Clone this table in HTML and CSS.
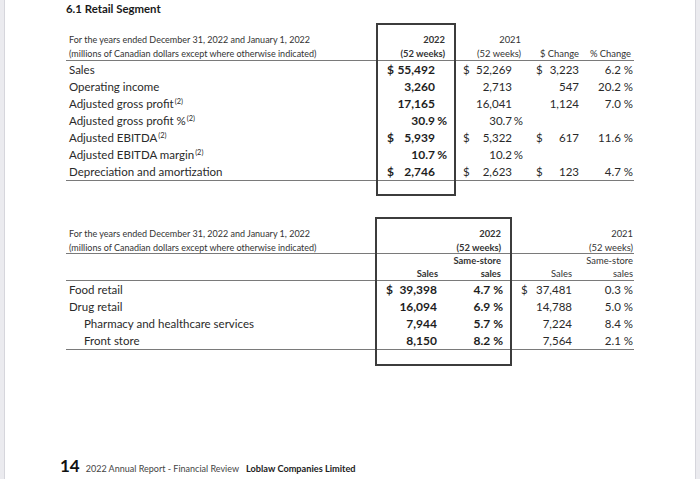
FILE: index.html
```html
<!DOCTYPE html>
<html lang="en">
<head>
<meta charset="utf-8">
<title>6.1 Retail Segment</title>
<link rel="stylesheet" href="styles.css">
</head>
<body>
<div class="page">
  <div class="edge edge-left"></div>
  <main class="content">
    <h1 class="title">6.1 Retail Segment</h1>

    <section class="tbl t1">
      <div class="box box1"></div>
      <div class="row head">
        <div class="lab small"><div>For the years ended December 31, 2022 and January 1, 2022</div><div>(millions of Canadian dollars except where otherwise indicated)</div></div>
        <div class="h c22 b"><div>2022</div><div>(52 weeks)</div></div>
        <div class="h c21"><div>2021</div><div>(52 weeks)</div></div>
        <div class="h cdc"><div>$ Change</div></div>
        <div class="h cpc"><div>% Change</div></div>
      </div>
      <div class="body">
        <div class="row">
          <div class="lab">Sales</div>
          <div class="v c22 b"><span class="cur">$</span><span class="num">55,492</span><span class="suf"></span></div>
          <div class="v c21"><span class="cur">$</span><span class="num">52,269</span><span class="suf"></span></div>
          <div class="v cdc"><span class="cur">$</span><span class="num">3,223</span></div>
          <div class="v cpc"><span class="num">6.2 %</span></div>
        </div>
        <div class="row">
          <div class="lab">Operating income</div>
          <div class="v c22 b"><span class="num">3,260</span><span class="suf"></span></div>
          <div class="v c21"><span class="num">2,713</span><span class="suf"></span></div>
          <div class="v cdc"><span class="num">547</span></div>
          <div class="v cpc"><span class="num">20.2 %</span></div>
        </div>
        <div class="row">
          <div class="lab">Adjusted gross profit<sup>(2)</sup></div>
          <div class="v c22 b"><span class="num">17,165</span><span class="suf"></span></div>
          <div class="v c21"><span class="num">16,041</span><span class="suf"></span></div>
          <div class="v cdc"><span class="num">1,124</span></div>
          <div class="v cpc"><span class="num">7.0 %</span></div>
        </div>
        <div class="row">
          <div class="lab">Adjusted gross profit %<sup>(2)</sup></div>
          <div class="v c22 b"><span class="num">30.9</span><span class="suf">%</span></div>
          <div class="v c21"><span class="num">30.7</span><span class="suf">%</span></div>
          <div class="v cdc"></div>
          <div class="v cpc"></div>
        </div>
        <div class="row">
          <div class="lab">Adjusted EBITDA<sup>(2)</sup></div>
          <div class="v c22 b"><span class="cur">$</span><span class="num">5,939</span><span class="suf"></span></div>
          <div class="v c21"><span class="cur">$</span><span class="num">5,322</span><span class="suf"></span></div>
          <div class="v cdc"><span class="cur">$</span><span class="num">617</span></div>
          <div class="v cpc"><span class="num">11.6 %</span></div>
        </div>
        <div class="row">
          <div class="lab">Adjusted EBITDA margin<sup>(2)</sup></div>
          <div class="v c22 b"><span class="num">10.7</span><span class="suf">%</span></div>
          <div class="v c21"><span class="num">10.2</span><span class="suf">%</span></div>
          <div class="v cdc"></div>
          <div class="v cpc"></div>
        </div>
        <div class="row">
          <div class="lab">Depreciation and amortization</div>
          <div class="v c22 b"><span class="cur">$</span><span class="num">2,746</span><span class="suf"></span></div>
          <div class="v c21"><span class="cur">$</span><span class="num">2,623</span><span class="suf"></span></div>
          <div class="v cdc"><span class="cur">$</span><span class="num">123</span></div>
          <div class="v cpc"><span class="num">4.7 %</span></div>
        </div>
      </div>
    </section>

    <section class="tbl t2">
      <div class="box box2"></div>
      <div class="row head head1">
        <div class="lab small"><div>For the years ended December 31, 2022 and January 1, 2022</div><div>(millions of Canadian dollars except where otherwise indicated)</div></div>
        <div class="h y22 b"><div>2022</div><div>(52 weeks)</div></div>
        <div class="h y21"><div>2021</div><div>(52 weeks)</div></div>
      </div>
      <div class="row head head2">
        <div class="lab"></div>
        <div class="h s22 b"><div>Sales</div></div>
        <div class="h ss22 b"><div>Same-store</div><div>sales</div></div>
        <div class="h s21"><div>Sales</div></div>
        <div class="h ss21"><div>Same-store</div><div>sales</div></div>
      </div>
      <div class="body">
        <div class="row">
          <div class="lab">Food retail</div>
          <div class="v s22 b"><span class="cur">$</span><span class="num">39,398</span></div>
          <div class="v ss22 b"><span class="num">4.7 %</span></div>
          <div class="v s21"><span class="cur">$</span><span class="num">37,481</span></div>
          <div class="v ss21"><span class="num">0.3 %</span></div>
        </div>
        <div class="row">
          <div class="lab">Drug retail</div>
          <div class="v s22 b"><span class="num">16,094</span></div>
          <div class="v ss22 b"><span class="num">6.9 %</span></div>
          <div class="v s21"><span class="num">14,788</span></div>
          <div class="v ss21"><span class="num">5.0 %</span></div>
        </div>
        <div class="row">
          <div class="lab sub">Pharmacy and healthcare services</div>
          <div class="v s22 b"><span class="num">7,944</span></div>
          <div class="v ss22 b"><span class="num">5.7 %</span></div>
          <div class="v s21"><span class="num">7,224</span></div>
          <div class="v ss21"><span class="num">8.4 %</span></div>
        </div>
        <div class="row">
          <div class="lab sub">Front store</div>
          <div class="v s22 b"><span class="num">8,150</span></div>
          <div class="v ss22 b"><span class="num">8.2 %</span></div>
          <div class="v s21"><span class="num">7,564</span></div>
          <div class="v ss21"><span class="num">2.1 %</span></div>
        </div>
      </div>
    </section>

    <footer class="footer">
      <span class="pg">14</span>
      <span class="doc">2022 Annual Report - Financial Review</span>
      <span class="co">Loblaw Companies Limited</span>
    </footer>
  </main>
  <div class="edge edge-right"></div>
</div>
</body>
</html>
```

FILE: styles.css
```css
* { box-sizing: border-box; }
html, body { margin: 0; padding: 0; background: #fff; }
body {
  font-family: "Lato", "Liberation Sans", sans-serif;
  color: #2a2a2a;
  width: 700px;
  height: 479px;
  overflow: hidden;
}
.page {
  display: flex;
  width: 700px;
  height: 479px;
}
.edge {
  flex: 0 0 5px;
  background: #ebebef;
}
.edge-left { border-right: 1px solid #d6d6dc; }
.edge-right { border-left: 1px solid #d6d6dc; }
.content {
  flex: 1;
  padding-left: 61px;
  display: flex;
  flex-direction: column;
}
.title {
  margin: 2px 0 0 0;
  font-size: 11.4px;
  line-height: 14px;
  font-weight: 700;
  color: #1a1a1a;
}
.tbl {
  position: relative;
  width: 568px;
}
.t1 { margin-top: 17px; }
.t2 { margin-top: 46px; }
.box {
  position: absolute;
  top: -10px;
  border: 2px solid #3c3c3c;
  pointer-events: none;
}
.box1 { left: 310px; width: 80px; height: 173px; }
.box2 { left: 309px; width: 137px; height: 149px; }

.row {
  display: grid;
  align-items: end;
}
.t1 .row { grid-template-columns: 310px 79px 70px 58px 51px; }
.t2 .row { grid-template-columns: 309px 75px 61px 69px 54px; }
.t2 .head1 { grid-template-columns: 309px 136px 123px; }

.head {
  border-bottom: 1px solid #7a7a7a;
  font-size: 9.4px;
  line-height: 13.5px;
  color: #333;
}
.head2 { line-height: 13px; }
.t1 .head { height: 28px; }
.t2 .head1 { height: 27px; }
.t2 .head2 { height: 27px; }
.small { font-size: 9px; padding-left: 3px; color: #333; }
.h { text-align: right; white-space: nowrap; }
.b { font-weight: 700; }

.body {
  border-bottom: 1px solid #7a7a7a;
}
.body .row {
  height: 17px;
  align-items: center;
  font-size: 11.5px;
  line-height: 17px;
}
.lab { padding-left: 3px; white-space: nowrap; }
.lab.sub { padding-left: 18px; }
.lab sup {
  font-size: 7.4px;
  line-height: 0;
  vertical-align: 4px;
  margin-left: 1px;
}
.v {
  display: flex;
  align-items: baseline;
  white-space: nowrap;
}
.v.b { font-size: 12px; color: #1e1e1e; }
.v .num { margin-left: auto; }
.suf { display: inline-block; text-align: right; }

/* table 1 columns */
.t1 .h.c22 { padding-right: 10px; }
.t1 .h.c21 { padding-right: 4px; }
.t1 .h.cdc { padding-right: 4px; }
.t1 .h.cpc { padding-right: 3px; }
.t1 .v.c22 { padding-left: 11px; padding-right: 8px; }
.t1 .v.c22 .suf { width: 12px; }
.t1 .v.c21 { padding-left: 8px; padding-right: 2px; }
.t1 .v.c21 .suf { width: 11px; }
.t1 .v.cdc { padding-left: 11px; padding-right: 4px; }
.t1 .v.cpc { padding-right: 1px; }

/* table 2 columns */
.t2 .h.y22 { padding-right: 10px; }
.t2 .h.y21 { padding-right: 1px; }
.t2 .h.s22 { padding-right: 12px; }
.t2 .h.ss22 { padding-right: 10px; }
.t2 .h.s21 { padding-right: 8px; }
.t2 .h.ss21 { padding-right: 1px; }
.t2 .v.s22 { padding-left: 11px; padding-right: 13px; }
.t2 .v.ss22 { padding-right: 8px; }
.t2 .v.s21 { padding-left: 10px; padding-right: 8px; }
.t2 .v.ss21 { padding-right: 1px; }

.footer {
  margin-top: auto;
  margin-left: -6px;
  margin-bottom: 0;
  display: flex;
  align-items: baseline;
  gap: 6px;
  line-height: 20px;
  color: #222;
}
.pg { font-size: 17px; font-weight: 700; color: #111; }
.doc { font-size: 9px; color: #444; }
.co { font-size: 9.2px; font-weight: 700; margin-left: 1px; }
```
